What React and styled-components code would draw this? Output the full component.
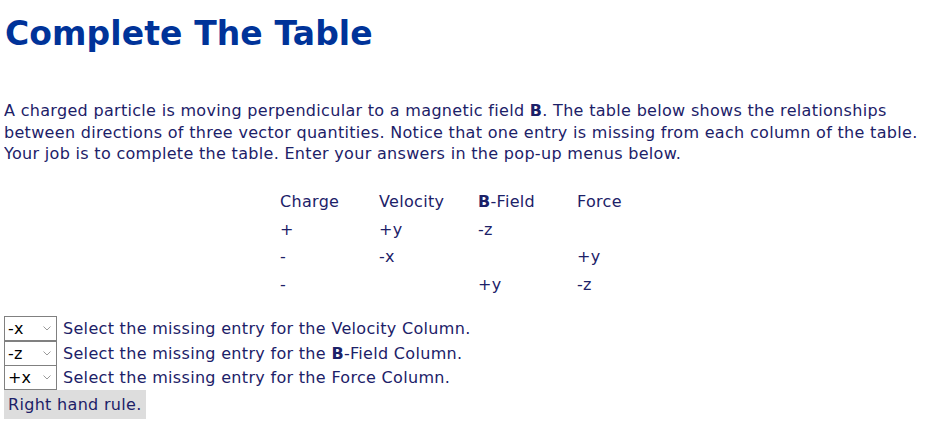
import React from "react";
import styled, { createGlobalStyle } from "styled-components";

const Global = createGlobalStyle`
  body {
    margin: 4px;
    font-family: "DejaVu Sans", Verdana, sans-serif;
    color: #1c2168;
    background: #fff;
  }
`;

const Title = styled.h1`
  font-size: 33px;
  font-weight: bold;
  color: #003399;
  margin: 10px 0 0 1px;
  line-height: 40px;
  letter-spacing: 0.1px;
`;

const Para = styled.p`
  font-size: 16px;
  line-height: 21.5px;
  letter-spacing: 0.31px;
  margin: 46px 0 0 0;
`;

const Table = styled.table`
  margin: 23px auto 0 auto;
  border-collapse: collapse;
  font-size: 16px;
  letter-spacing: 0.31px;
  position: relative;
  left: 15px;
`;

const Cell = styled.td`
  width: 99px;
  padding: 0;
  height: 27.7px;
  vertical-align: middle;
  text-align: left;
`;

const Controls = styled.div`
  margin-top: 18px;
  display: flex;
  flex-direction: column;
  align-items: flex-start;
`;

const Row = styled.div`
  display: flex;
  align-items: center;
  font-size: 16px;
  letter-spacing: 0.31px;
  height: 24.7px;
`;

const SelectWrap = styled.span`
  position: relative;
  display: inline-flex;
  margin-right: 6px;
`;

const Select = styled.select`
  appearance: none;
  -webkit-appearance: none;
  width: 53px;
  height: 25px;
  font-family: "DejaVu Sans", Verdana, sans-serif;
  font-size: 16px;
  letter-spacing: 0.2px;
  color: #000;
  border: 1px solid #808080;
  border-radius: 0;
  background: #fff;
  padding: 0 0 0 3px;
  outline: none;
`;

const Chevron = styled.svg`
  position: absolute;
  right: 6px;
  top: 10px;
  width: 8px;
  height: 5px;
  pointer-events: none;
`;

const Hint = styled.div`
  background: #dddddd;
  font-size: 16px;
  letter-spacing: 0.31px;
  padding: 5px 4px 5px 4px;
`;

const rows = [
  ["+", "+y", "-z", ""],
  ["-", "-x", "", "+y"],
  ["-", "", "+y", "-z"],
];

const questions = [
  { value: "-x", label: <>Velocity</> },
  { value: "-z", label: <><b>B</b>-Field</> },
  { value: "+x", label: <>Force</> },
];

const options = ["", "+x", "-x", "+y", "-y", "+z", "-z"];

export default function App() {
  return (
    <>
      <Global />
      <Title>Complete The Table</Title>
      <Para>
        A charged particle is moving perpendicular to a magnetic field <b>B</b>. The table below shows the relationships between directions of three vector quantities. Notice that one entry is missing from each column of the table. Your job is to complete the table. Enter your answers in the pop-up menus below.
      </Para>
      <Table>
        <tbody>
          <tr>
            <Cell>Charge</Cell>
            <Cell>Velocity</Cell>
            <Cell><b>B</b>-Field</Cell>
            <Cell>Force</Cell>
          </tr>
          {rows.map((r, i) => (
            <tr key={i}>
              {r.map((c, j) => (
                <Cell key={j}>{c}</Cell>
              ))}
            </tr>
          ))}
        </tbody>
      </Table>
      <Controls>
        {questions.map((q, i) => (
          <Row key={i}>
            <SelectWrap>
              <Select defaultValue={q.value}>
                {options.map((o) => (
                  <option key={o} value={o}>{o}</option>
                ))}
              </Select>
              <Chevron viewBox="0 0 8 5">
                <path d="M0.5 0.5 L4 4 L7.5 0.5" fill="none" stroke="#9a9a9a" strokeWidth="1" />
              </Chevron>
            </SelectWrap>
            <span>Select the missing entry for the {q.label} Column.</span>
          </Row>
        ))}
        <Hint>Right hand rule.</Hint>
      </Controls>
    </>
  );
}
